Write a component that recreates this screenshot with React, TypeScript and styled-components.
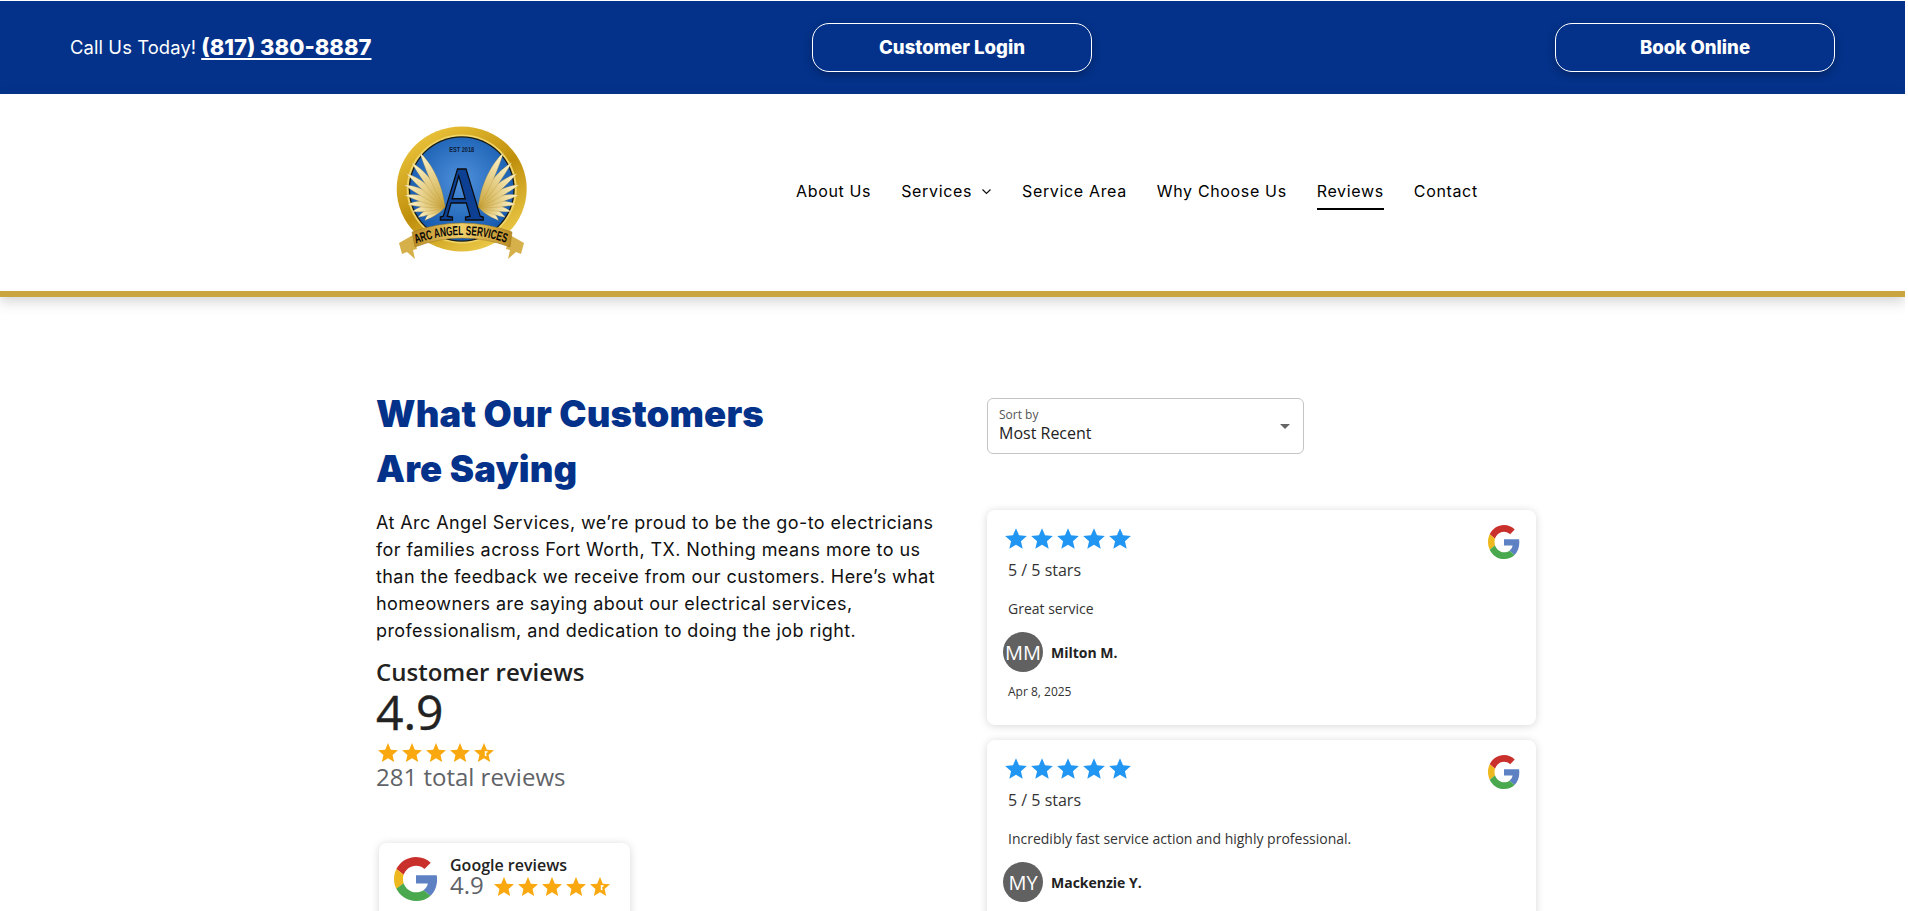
import React from "react";
import styled, { createGlobalStyle } from "styled-components";

const Global = createGlobalStyle`
  html, body { margin: 0; padding: 0; height: 911px; overflow: hidden; background: #fff; }
  body { font-family: "Open Sans", sans-serif; color: #222; }
  * { box-sizing: border-box; }
`;
const Page = styled.div`width: 1905px; height: 911px; overflow: hidden; background: #fff;`;
const TopBar = styled.div`
  height: 93px; margin-top: 1px; background: #04328a; padding: 0 70px 1px 69px;
  display: grid; grid-template-columns: 1fr auto 1fr; align-items: center; color: #fff;
`;
const Call = styled.div`font-family: Inter, sans-serif; font-size: 18.4px; display: flex; align-items: center; gap: 5px; letter-spacing: .1px; padding-left: 1px;`;
const Phone = styled.a`font-weight: 800; font-size: 22px; text-decoration: underline; text-underline-offset: 3px; letter-spacing: 0; color: #fff;`;
const TopButton = styled.a<{ $end?: boolean }>`
  width: 280px; height: 49px; border: 1px solid #fff; border-radius: 17px; display: flex; align-items: center; justify-content: center;
  font-family: Inter, sans-serif; font-weight: 800; font-size: 18.6px; color: #fff; box-shadow: 0 3px 8px rgba(0,0,0,.28);
  justify-self: ${p => (p.$end ? "end" : "auto")};
`;
const NavBar = styled.header`
  height: 203px; background: #fff; border-bottom: 6px solid #c9a43f; box-shadow: 0 5px 12px rgba(60,70,60,.22);
  padding: 31px 0 0 395px; display: flex; align-items: flex-start; position: relative;
`;
const Logo = styled.svg`width: 133px; height: 136px; flex: none;`;
const Menu = styled.nav`margin: 49px 0 0 268px; display: flex; gap: 30px; font-family: Inter, sans-serif; font-size: 16px; letter-spacing: .65px; color: #000;`;
const MenuItem = styled.a<{ $active?: boolean }>`
  height: 36px; display: flex; align-items: flex-start; gap: 9px; padding-top: 5px; color: #000; line-height: 24px;
  border-bottom: 2px solid ${p => (p.$active ? "#000" : "transparent")};
`;
const Main = styled.main`width: 1160px; margin: 0 0 0 376px; padding-top: 90px; display: grid; grid-template-columns: 611px 549px;`;
const Left = styled.section`display: flex; flex-direction: column; align-items: flex-start;`;
const Title = styled.h1`margin: 0; font-family: Inter, sans-serif; color: #04328a; font-weight: 900; font-size: 36.5px; line-height: 55px; letter-spacing: .15px;`;
const Intro = styled.p`margin: 12px 0 0; width: 575px; font-family: Inter, sans-serif; font-size: 18px; line-height: 27px; color: #111; letter-spacing: .42px;`;
const SummaryTitle = styled.div`margin-top: 11px; font-size: 24px; font-weight: 600; line-height: 33px; color: #222;`;
const Score = styled.div`font-size: 48px; font-weight: 500; -webkit-text-stroke: .4px #222; line-height: 48px; color: #222; height: 48px; margin-bottom: 5px;`;
const Stars = styled.div<{ $size: number }>`display: flex; height: ${p => p.$size}px; svg { width: ${p => p.$size}px; height: ${p => p.$size}px; display: block; }`;
const Total = styled.div`font-size: 24px; line-height: 28px; color: #5f6368; margin-top: -2px;`;
const BadgeCard = styled.div`
  margin: 52px 0 0 3px; width: 251px; height: 90px; padding: 12px 15px; border-radius: 8px; background: #fff;
  box-shadow: 0 1px 8px rgba(0,0,0,.16); display: flex; gap: 12px;
`;
const BadgeLogo = styled.svg`width: 44px; height: 44px; flex: none; margin-top: 2px;`;
const BadgeBody = styled.div`display: flex; flex-direction: column;`;
const BadgeTitle = styled.div`font-size: 16px; font-weight: 600; line-height: 20px; color: #222;`;
const BadgeRow = styled.div`display: flex; align-items: center; gap: 8px; height: 24px;`;
const BadgeScore = styled.span`font-size: 24px; line-height: 24px; color: #5f6368; margin-top: -5px;`;
const Right = styled.section`display: flex; flex-direction: column; align-items: flex-start;`;
const Sort = styled.div`
  width: 317px; height: 56px; margin-top: 11px; border: 1px solid #c4c4c4; border-radius: 6px; padding: 8px 11px 0; position: relative;
`;
const SortLabel = styled.div`font-size: 12px; line-height: 16px; color: #555;`;
const SortValue = styled.div`font-size: 16px; line-height: 22px; color: #222; margin-top: -1px;`;
const SortArrow = styled.span`
  position: absolute; right: 13px; top: 25px; width: 0; height: 0; border-left: 5px solid transparent; border-right: 5px solid transparent; border-top: 5px solid #666;
`;
const Cards = styled.div`margin-top: 56px; width: 549px; display: flex; flex-direction: column; gap: 15px;`;
const Card = styled.article`
  height: 215px; background: #fff; border-radius: 8px; box-shadow: 0 1px 8px rgba(0,0,0,.16); padding: 16px 16px 0;
  position: relative; display: flex; flex-direction: column;
`;
const CardLogo = styled.svg`position: absolute; right: 16px; top: 15px; width: 32px; height: 34px;`;
const RatingText = styled.div`margin: 7px 0 0 5px; font-size: 16px; line-height: 22px; color: #333;`;
const Quote = styled.div`margin: 18px 0 0 5px; font-size: 14px; line-height: 20px; color: #333;`;
const Author = styled.div`display: flex; align-items: center; gap: 8px; margin-top: 13px;`;
const Avatar = styled.div`width: 40px; height: 40px; border-radius: 50%; background: #616161; color: #fff; display: flex; align-items: center; justify-content: center; font-size: 20px;`;
const Name = styled.div`font-size: 14px; font-weight: 700; color: #222;`;
const DateText = styled.div`margin: 11px 0 0 5px; font-size: 12px; line-height: 18px; color: #333;`;

const STAR = "M12 17.27L18.18 21l-1.64-7.03L22 9.24l-7.19-.61L12 2 9.19 8.63 2 9.24l5.46 4.73L5.82 21z";
const HOLE = "M12.8 15V10l3.4.6-2.1 2 .6 2.7z";
const StarIcon = ({ color, half }: { color: string; half?: boolean }) => (
  <svg viewBox="0 0 24 24"><path fill={color} fillRule="evenodd" d={half ? STAR + HOLE : STAR} /></svg>
);
const StarRow = ({ size, color, half }: { size: number; color: string; half?: boolean }) => (
  <Stars $size={size}>
    {[0, 1, 2, 3, 4].map(i => <StarIcon key={i} color={color} half={half && i === 4} />)}
  </Stars>
);
const GMark = () => (
  <>
    <path fill="#c9302c" d="M24 9.5c3.54 0 6.71 1.22 9.21 3.6l6.85-6.85C35.9 2.38 30.47 0 24 0 14.62 0 6.51 5.38 2.56 13.22l7.98 6.19C12.43 13.72 17.74 9.5 24 9.5z" />
    <path fill="#5e81c3" d="M46.98 24.55c0-1.57-.15-3.09-.38-4.55H24v9.02h12.94c-.58 2.96-2.26 5.48-4.78 7.18l7.73 6c4.51-4.18 7.09-10.36 7.09-17.65z" />
    <path fill="#eeb91f" d="M10.53 28.59c-.48-1.45-.76-2.99-.76-4.59s.27-3.14.76-4.59l-7.98-6.19C.92 16.46 0 20.12 0 24c0 3.88.92 7.54 2.56 10.78l7.97-6.19z" />
    <path fill="#4aa84e" d="M24 48c6.48 0 11.93-2.13 15.89-5.81l-7.73-6c-2.15 1.45-4.92 2.3-8.16 2.3-6.26 0-11.57-4.22-13.47-9.91l-7.98 6.19C6.51 42.62 14.62 48 24 48z" />
  </>
);

const feathers = Array.from({ length: 9 }, (_, i) => {
  const t = i / 8;
  return { angle: -28 + t * 96, length: 24 + t * 36, width: 4 + t };
});
const Wing = ({ flip }: { flip?: boolean }) => (
  <g transform={flip ? "translate(133.4 0) scale(-1 1)" : undefined}>
    {feathers.map(f => (
      <path key={f.angle} fill="url(#wing)" stroke="#b58d2a" strokeWidth=".25"
        transform={`translate(50 82) rotate(${f.angle})`}
        d={`M0 0C${-f.length * .4} ${-f.width * 1.4} ${-f.length * .8} ${-f.width * .6} ${-f.length} ${f.width * .6}C${-f.length * .8} ${f.width * .7} ${-f.length * .4} ${f.width} 0 0z`} />
    ))}
  </g>
);
const LogoMark = () => (
  <Logo viewBox="0 0 133 136">
    <defs>
      <linearGradient id="gold" x1=".2" y1="0" x2=".8" y2="1">
        <stop offset="0" stopColor="#edc63c" /><stop offset=".5" stopColor="#bf8f0c" /><stop offset="1" stopColor="#f1d04f" />
      </linearGradient>
      <linearGradient id="wing" x1="1" y1="0" x2="0" y2="0">
        <stop offset="0" stopColor="#c9a43a" /><stop offset="1" stopColor="#fff6cf" />
      </linearGradient>
      <radialGradient id="sky" cx=".5" cy=".42" r=".62">
        <stop offset="0" stopColor="#4f90da" /><stop offset="1" stopColor="#0f55ab" />
      </radialGradient>
      <linearGradient id="ribbon" x1="0" y1="0" x2="1" y2="0">
        <stop offset="0" stopColor="#b98a24" /><stop offset=".5" stopColor="#efcf6a" /><stop offset="1" stopColor="#b98a24" />
      </linearGradient>
      <path id="ribbonArc" d="M20 119Q67 101 114 119" />
    </defs>
    <ellipse cx="66.7" cy="64" rx="65" ry="62.5" fill="url(#gold)" />
    <ellipse cx="66.7" cy="64" rx="55" ry="54.5" fill="#f0d568" />
    <ellipse cx="66.7" cy="64" rx="53" ry="52.8" fill="#1a1a12" />
    <ellipse cx="66.7" cy="64" rx="51.7" ry="51.5" fill="url(#sky)" />
    <text x="66.7" y="27" textAnchor="middle" fontFamily="Liberation Sans" fontWeight="700" fontSize="8" fill="#0e1c36" textLength="25" lengthAdjust="spacingAndGlyphs">EST 2018</text>
    <Wing /><Wing flip />
    <text transform="translate(66.7 95) scale(.78 1)" textAnchor="middle" fontFamily="Liberation Serif" fontWeight="700" fontSize="78" fill="#0d3f92" stroke="#0a0a0a" strokeWidth="1.6">A</text>
    <path d="M4 118l14-8 4 14-4 1 2 9-8-7-5 2z" fill="#d6b04a" />
    <path d="M129 118l-14-8-4 14 4 1-2 9 8-7 5 2z" fill="#d6b04a" />
    <path d="M17 107Q67 89 117 107l-2 15Q67 104 20 122z" fill="url(#ribbon)" stroke="#9a7618" strokeWidth=".5" />
    <text fontFamily="Liberation Sans" fontWeight="700" fontSize="13" fill="#070707" textLength="92" lengthAdjust="spacingAndGlyphs">
      <textPath href="#ribbonArc" startOffset="1%">ARC ANGEL SERVICES</textPath>
    </text>
  </Logo>
);

const reviews = [
  { name: "Milton M.", initials: "MM", text: "Great service", date: "Apr 8, 2025" },
  { name: "Mackenzie Y.", initials: "MY", text: "Incredibly fast service action and highly professional.", date: "Apr 2, 2025" },
];

export default function App() {
  return (
    <Page>
      <Global />
      <TopBar>
        <Call>Call Us Today! <Phone>(817) 380-8887</Phone></Call>
        <TopButton>Customer Login</TopButton>
        <TopButton $end>Book Online</TopButton>
      </TopBar>
      <NavBar>
        <LogoMark />
        <Menu>
          <MenuItem>About Us</MenuItem>
          <MenuItem>Services
            <svg width="11" height="24" viewBox="0 0 11 24" fill="none" stroke="#111" strokeWidth="1.2"><path d="M1.5 10.5l4 4 4-4" /></svg>
          </MenuItem>
          <MenuItem>Service Area</MenuItem>
          <MenuItem>Why Choose Us</MenuItem>
          <MenuItem $active>Reviews</MenuItem>
          <MenuItem>Contact</MenuItem>
        </Menu>
      </NavBar>
      <Main>
        <Left>
          <Title>What Our Customers<br />Are Saying</Title>
          <Intro>At Arc Angel Services, we’re proud to be the go-to electricians for families across Fort Worth, TX. Nothing means more to us than the feedback we receive from our customers. Here’s what homeowners are saying about our electrical services, professionalism, and dedication to doing the job right.</Intro>
          <SummaryTitle>Customer reviews</SummaryTitle>
          <Score>4.9</Score>
          <StarRow size={24} color="#f9a80f" half />
          <Total>281 total reviews</Total>
          <BadgeCard>
            <BadgeLogo viewBox="0 0 48 48"><GMark /></BadgeLogo>
            <BadgeBody>
              <BadgeTitle>Google reviews</BadgeTitle>
              <BadgeRow><BadgeScore>4.9</BadgeScore><StarRow size={24} color="#f9a80f" half /></BadgeRow>
            </BadgeBody>
          </BadgeCard>
        </Left>
        <Right>
          <Sort>
            <SortLabel>Sort by</SortLabel>
            <SortValue>Most Recent</SortValue>
            <SortArrow />
          </Sort>
          <Cards>
            {reviews.map(r => (
              <Card key={r.name}>
                <CardLogo viewBox="0 0 48 48" preserveAspectRatio="none"><GMark /></CardLogo>
                <StarRow size={26} color="#2196f3" />
                <RatingText>5 / 5 stars</RatingText>
                <Quote>{r.text}</Quote>
                <Author><Avatar>{r.initials}</Avatar><Name>{r.name}</Name></Author>
                <DateText>{r.date}</DateText>
              </Card>
            ))}
          </Cards>
        </Right>
      </Main>
    </Page>
  );
}
